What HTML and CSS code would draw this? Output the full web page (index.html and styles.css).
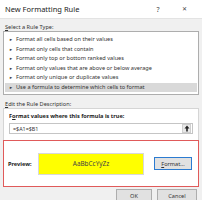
FILE: index.html
```html
<!DOCTYPE html>
<html lang="en">
<head>
    <meta charset="UTF-8">
    <title>New Formatting Rule</title>
    <link rel="stylesheet" href="styles.css">
</head>
<body>
    <div class="dialog">
        <div class="titlebar">
            <span class="title">New Formatting Rule</span>
            <span class="title-btn">?</span>
            <span class="title-btn close">✕</span>
        </div>

        <div class="content">
            <div class="label"><u>S</u>elect a Rule Type:</div>
            <div class="rule-list">
                <div class="rule-item"><span class="arrow">►</span>Format all cells based on their values</div>
                <div class="rule-item"><span class="arrow">►</span>Format only cells that contain</div>
                <div class="rule-item"><span class="arrow">►</span>Format only top or bottom ranked values</div>
                <div class="rule-item"><span class="arrow">►</span>Format only values that are above or below average</div>
                <div class="rule-item"><span class="arrow">►</span>Format only unique or duplicate values</div>
                <div class="rule-item selected"><span class="arrow">►</span>Use a formula to determine which cells to format</div>
            </div>

            <div class="label"><u>E</u>dit the Rule Description:</div>
            <div class="desc-panel">
                <div class="desc-title">F<u>o</u>rmat values where this formula is true:</div>
                <div class="formula-row">
                    <div class="formula-input">=$A1=$B1</div>
                    <div class="ref-btn">
                        <svg width="6" height="7" viewBox="0 0 6 7">
                            <path d="M3 0.5 L5.5 3.5 L3.8 3.5 L3.8 6.5 L2.2 6.5 L2.2 3.5 L0.5 3.5 Z" fill="#222"/>
                        </svg>
                    </div>
                </div>
                <div class="preview-box">
                    <span class="preview-label">Preview:</span>
                    <div class="preview-sample">AaBbCcYyZz</div>
                    <div class="btn format-btn"><u>F</u>ormat...</div>
                </div>
            </div>

            <div class="footer">
                <div class="btn ok-btn">OK</div>
                <div class="btn">Cancel</div>
            </div>
        </div>
    </div>
</body>
</html>
```

FILE: styles.css
```css
* {
    box-sizing: border-box;
}
body {
    margin: 0;
    width: 202px;
    height: 200px;
    overflow: hidden;
    font-family: "Noto Sans", "Open Sans", sans-serif;
    font-size: 5.6px;
    color: #333;
    background-color: #f0f0f0;
}
u {
    text-decoration: underline;
}
.titlebar {
    height: 19px;
    background-color: #fff;
    display: flex;
    align-items: center;
    padding: 0 8px 0 5px;
    border-bottom: 1px solid #e3e3e3;
}
.title {
    flex: 1;
    font-size: 7.5px;
    color: #222;
}
.title-btn {
    font-size: 7px;
    color: #444;
    width: 20px;
    text-align: center;
}
.close {
    margin-left: 6px;
    font-size: 6px;
}
.content {
    padding: 0 3px 0 3px;
}
.label {
    height: 12px;
    padding: 4px 0 0 2px;
    line-height: 8px;
}
.rule-list {
    background-color: #fff;
    border: 1px solid #adadad;
    padding: 3px 1px 2px 1px;
    margin-bottom: 1px;
}
.rule-item {
    height: 9.5px;
    line-height: 9.5px;
    padding-left: 4px;
    white-space: nowrap;
}
.rule-item.selected {
    background-color: #d9d9d9;
}
.arrow {
    display: inline-block;
    width: 7px;
    font-size: 4px;
    color: #333;
}
.desc-panel {
    background-color: #fff;
    border: 1px solid #d5d5d5;
    margin-top: 0;
    padding: 2px 0 0 0;
}
.desc-title {
    font-weight: bold;
    color: #222;
    padding-left: 5px;
    line-height: 10px;
}
.formula-row {
    display: flex;
    align-items: center;
    margin: 2px 5px 0 5px;
    height: 11px;
    border: 1px solid #c5c5c5;
}
.formula-input {
    flex: 1;
    padding-left: 3px;
    font-size: 5.4px;
}
.ref-btn {
    width: 9px;
    height: 9px;
    margin-right: 1px;
    background-color: #e8e8e8;
    border: 1px solid #cfcfcf;
    display: flex;
    align-items: center;
    justify-content: center;
}
.preview-box {
    display: flex;
    align-items: center;
    margin: 6px -1px -1px -1px;
    height: 47px;
    border: 1px solid #e05a5a;
    padding: 0 6px 0 4px;
}
.preview-label {
    font-weight: bold;
    color: #222;
    width: 30px;
}
.preview-sample {
    width: 106px;
    height: 22px;
    background-color: #ffff00;
    border: 1px solid #d8d8d8;
    display: flex;
    align-items: center;
    justify-content: center;
    font-size: 6.4px;
    color: #444;
}
.btn {
    width: 40px;
    height: 13px;
    display: flex;
    align-items: center;
    justify-content: center;
    background-color: #e1e1e1;
    border: 1px solid #adadad;
    color: #333;
}
.format-btn {
    margin-left: auto;
    width: 38px;
    border-color: #2b7bd1;
}
.ok-btn {
    width: 36px;
}
.footer {
    display: flex;
    justify-content: flex-end;
    gap: 5px;
    padding: 2px 2px 0 0;
}
```
